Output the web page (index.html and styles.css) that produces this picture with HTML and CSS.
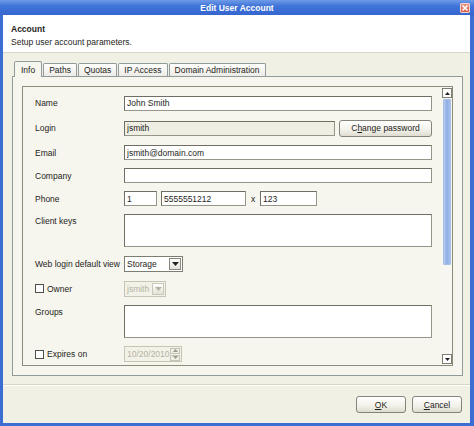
FILE: index.html
```html
<!DOCTYPE html>
<html lang="en">
<head>
  <meta charset="UTF-8">
  <title>Edit User Account</title>
  <link rel="stylesheet" href="styles.css">
</head>
<body>
  <div class="window">
    <div class="titlebar">
      <span class="title">Edit User Account</span>
      <span class="close">
        <svg width="10" height="10" viewBox="0 0 10 10"><path d="M2.5 2.5 L7.5 7.5 M7.5 2.5 L2.5 7.5" stroke="#fff" stroke-width="1.6"/></svg>
      </span>
    </div>
    <div class="frame">
      <div class="header">
        <div class="header-title">Account</div>
        <div class="header-sub">Setup user account parameters.</div>
      </div>
      <div class="content">
        <div class="tabs">
          <div class="tab active">Info</div>
          <div class="tab">Paths</div>
          <div class="tab">Quotas</div>
          <div class="tab">IP Access</div>
          <div class="tab">Domain Administration</div>
        </div>
        <div class="panel">
          <div class="scrollbox">
            <form class="form">
              <div class="row row-name">
                <label>Name</label>
                <input class="field wide" type="text" value="John Smith">
              </div>
              <div class="row row-login">
                <label>Login</label>
                <input class="field login" type="text" value="jsmith" disabled>
                <button type="button" class="btn change">C<u>h</u>ange password</button>
              </div>
              <div class="row">
                <label>Email</label>
                <input class="field wide" type="text" value="jsmith@domain.com">
              </div>
              <div class="row">
                <label>Company</label>
                <input class="field wide" type="text" value="">
              </div>
              <div class="row">
                <label>Phone</label>
                <input class="field code" type="text" value="1">
                <input class="field number" type="text" value="5555551212">
                <span class="ext-x">x</span>
                <input class="field ext" type="text" value="123">
              </div>
              <div class="row row-area">
                <label>Client keys</label>
                <textarea class="field area"></textarea>
              </div>
              <div class="row row-combo">
                <label>Web login default view</label>
                <div class="combo storage">
                  <span class="combo-text">Storage</span>
                  <span class="combo-btn"><svg width="7" height="4" viewBox="0 0 7 4"><path d="M0 0 H7 L3.5 4 Z" fill="#222"/></svg></span>
                </div>
              </div>
              <div class="row row-owner">
                <label class="check"><span class="box"></span>Owner</label>
                <div class="combo owner disabled">
                  <span class="combo-text">jsmith</span>
                  <span class="combo-btn"><svg width="7" height="4" viewBox="0 0 7 4"><path d="M0 0 H7 L3.5 4 Z" fill="#b4b3a6"/></svg></span>
                </div>
              </div>
              <div class="row row-area row-groups">
                <label>Groups</label>
                <textarea class="field area"></textarea>
              </div>
              <div class="row row-combo">
                <label class="check"><span class="box"></span>Expires on</label>
                <div class="combo spinner disabled">
                  <span class="combo-text">10/20/2010</span>
                  <span class="spin">
                    <span class="spin-btn"><svg width="5" height="3" viewBox="0 0 5 3"><path d="M0 3 H5 L2.5 0 Z" fill="#9a998c"/></svg></span>
                    <span class="spin-btn"><svg width="5" height="3" viewBox="0 0 5 3"><path d="M0 0 H5 L2.5 3 Z" fill="#9a998c"/></svg></span>
                  </span>
                </div>
              </div>
            </form>
            <div class="scrollbar">
              <span class="arrow"><svg width="5" height="3" viewBox="0 0 5 3"><path d="M0 3 H5 L2.5 0 Z" fill="#222"/></svg></span>
              <div class="track">
                <div class="thumb"></div>
              </div>
              <span class="arrow"><svg width="5" height="3" viewBox="0 0 5 3"><path d="M0 0 H5 L2.5 3 Z" fill="#222"/></svg></span>
            </div>
          </div>
        </div>
      </div>
      <div class="footer">
        <button type="button" class="btn footer-btn"><u>O</u>K</button>
        <button type="button" class="btn footer-btn"><u>C</u>ancel</button>
      </div>
    </div>
  </div>
</body>
</html>
```

FILE: styles.css
```css
body { margin: 0; font-family: "Liberation Sans", Arial, sans-serif; font-size: 8.5px; color: #1e1e1a; overflow: hidden; }
.window { width: 474px; height: 426px; display: flex; flex-direction: column; background: #3b6dd3; }

.titlebar { height: 15px; position: relative; display: flex; align-items: center; justify-content: center;
  background: linear-gradient(#6f9ce8, #3f74d8 40%, #3566cf); }
.title { color: #fff; font-weight: bold; font-size: 8.5px; }
.close { position: absolute; right: 4px; top: 3px; width: 10px; height: 10px; border-radius: 2px;
  background: linear-gradient(#e99a8c, #d2523d); box-shadow: 0 0 0 1px #f2d6d0 inset; display: flex; }

.frame { flex: 1; margin: 0 4px 3px 3px; background: #f1f0e5; display: flex; flex-direction: column; }
.header { height: 38px; box-sizing: border-box; padding: 9px 8px 0; background: #fff; border-bottom: 1px solid #d9d6c6; }
.header-title { font-weight: bold; }
.header-sub { margin-top: 3px; }

.content { padding: 8px 7px 0 9px; }
.tabs { display: flex; padding-left: 2px; height: 15px; align-items: flex-end; }
.tab { height: 13px; padding: 0 5px; margin-right: 1px; display: flex; align-items: center; box-sizing: border-box;
  border: 1px solid #919b9c; border-bottom: none; border-radius: 2px 2px 0 0; background: linear-gradient(#ffffff, #ecebe5); }
.tab.active { height: 16px; margin-bottom: -1px; background: #f6f5ee; position: relative; z-index: 1; padding: 0 6px; }

.panel { height: 300px; box-sizing: border-box; border: 1px solid #919b9c; background: #f6f5ee; padding: 9px; }
.scrollbox { height: 100%; box-sizing: border-box; border: 1px solid #8d8b7c; display: flex; }

.form { flex: 1; margin: 0; padding: 8px 10px 0 12px; display: flex; flex-direction: column; gap: 8px; }
.row { display: flex; align-items: center; height: 15px; }
.row-name, .row-combo { height: 16px; }
.row-login { height: 18px; }
.row-owner { height: 17px; }
.row-area { height: 34px; align-items: flex-start; }
.row-groups { height: 33px; }
.row-area label { margin-top: 2px; }
.row label { width: 89px; flex: none; }

.field { box-sizing: border-box; height: 15px; padding: 0 2px; margin: 0; border: 1px solid #96958a; border-top-color: #6f6e64;
  border-left-color: #6f6e64; background: #fff; font: inherit; color: #1e1e1a; }
.wide { width: 308px; }
.login { width: 211px; background: #efeee3; color: #1e1e1a; }
.change { margin-left: 4px; width: 93px; height: 17px; }
.code { width: 33px; }
.number { width: 85px; margin-left: 4px; }
.ext-x { width: 14px; text-align: center; }
.ext { width: 57px; }
.area { width: 308px; height: 33px; resize: none; }

.btn { box-sizing: border-box; font: inherit; color: #1e1e1a; border: 1px solid #85847a; border-radius: 3px; padding: 0;
  background: linear-gradient(#ffffff, #f2f1ea 60%, #dedcd0); }

.combo { display: flex; align-items: center; height: 16px; box-sizing: border-box; border: 1px solid #7e7d72; background: #fff; padding: 1px; }
.combo-text { flex: 1; padding-left: 1px; }
.combo-btn { width: 12px; height: 12px; box-sizing: border-box; border: 1px solid #8a897e; background: linear-gradient(#fff, #e3e2d8);
  display: flex; align-items: center; justify-content: center; }
.storage { width: 59px; }
.disabled { border-color: #c6c5b6; background: #f3f2e8; color: #b3b2a3; }
.owner { width: 42px; }
.owner .combo-btn { border-color: #c9c8bb; }
.spinner { width: 58px; }
.spin { display: flex; flex-direction: column; gap: 1px; }
.spin-btn { width: 10px; height: 6px; border: 1px solid #c5c4b6; box-sizing: border-box; background: #efeee4;
  display: flex; align-items: center; justify-content: center; }

.check { display: flex; align-items: center; }
.box { width: 9px; height: 9px; box-sizing: border-box; border: 1px solid #4f4f49; background: #fff; margin-right: 3px; }

.scrollbar { width: 11px; display: flex; flex-direction: column; background: #f7f6f0; }
.arrow { height: 10px; margin: 1px 0; box-sizing: border-box; border: 1px solid #7e7d72; background: #fff;
  display: flex; align-items: center; justify-content: center; }
.track { flex: 1; }
.thumb { height: 166px; margin: 0 1px; border-radius: 1px; background: linear-gradient(90deg, #b6cbef, #8eaee4 50%, #a7c0ec); border: 1px solid #a7bde6; box-sizing: border-box; }

.footer { margin-top: 8px; border-top: 1px solid #d7d5c5; box-shadow: 0 1px 0 #fff inset; padding: 11px 8px 0;
  display: flex; justify-content: flex-end; gap: 6px; }
.footer-btn { width: 50px; height: 17px; }
```
